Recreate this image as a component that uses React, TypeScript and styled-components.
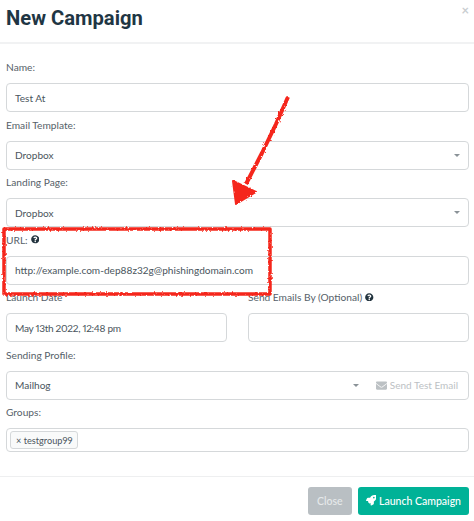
import React from "react";
import styled, { createGlobalStyle } from "styled-components";
import { FaEnvelope, FaQuestionCircle, FaRocket } from "react-icons/fa";

const GlobalStyle = createGlobalStyle`
  html, body {
    margin: 0;
    padding: 0;
    background: #fff;
  }
  body {
    font-family: Lato, "Liberation Sans", sans-serif;
    font-variant-numeric: proportional-nums;
    color: #4f5b63;
  }
`;

const Modal = styled.div`
  position: relative;
  width: 474px;
  height: 521px;
  overflow: hidden;
  background: #fff;
`;

const Header = styled.header`
  position: relative;
  height: 37px;
  padding: 5px 6px 0;
  border-bottom: 2px solid #f1f2f3;
`;

const Title = styled.h1`
  margin: 0;
  font-family: Roboto, "Liberation Sans", sans-serif;
  font-size: 20.2px;
  line-height: 26px;
  font-weight: 700;
  color: #1f3644;
`;

const CloseX = styled.span`
  position: absolute;
  top: 3px;
  right: 5px;
  font-size: 13px;
  line-height: 14px;
  font-weight: 700;
  color: #c9cdd0;
`;

const Body = styled.div`
  display: flex;
  flex-direction: column;
  padding: 15px 5px 0 6px;
`;

const Label = styled.label`
  display: flex;
  align-items: center;
  gap: 3px;
  height: 16px;
  margin-bottom: 8px;
  font-size: 10.2px;
  line-height: 16px;
  color: #566169;
  svg {
    color: #22333e;
    font-size: 8.5px;
  }
`;

const Field = styled.div<{ $h?: number }>`
  display: flex;
  align-items: center;
  height: ${(p) => p.$h ?? 29}px;
  box-sizing: border-box;
  margin-bottom: 4.5px;
  padding: 0 8px;
  border: 1px solid #d5d8da;
  border-radius: 4px;
  background: #fff;
  font-size: 10.1px;
  color: #4a555d;
`;

const Value = styled.span`
  flex: 1;
`;

const DateValue = styled.span`
  letter-spacing: -0.3px;
`;

const Caret = styled.span`
  width: 0;
  height: 0;
  border-left: 3px solid transparent;
  border-right: 3px solid transparent;
  border-top: 3px solid #8a9297;
`;

const Row = styled.div`
  display: grid;
  grid-template-columns: 221px 221px;
  justify-content: space-between;
`;

const TestEmail = styled.span`
  display: flex;
  align-items: center;
  gap: 3px;
  margin-left: 17px;
  margin-right: 2px;
  color: #bcc1c4;
  font-size: 10px;
  svg {
    font-size: 11px;
  }
`;

const Tag = styled.span`
  display: inline-flex;
  align-items: center;
  height: 16px;
  padding: 0 4px 0 5px;
  margin-left: -5px;
  border: 1px solid #d5d8da;
  border-radius: 3px;
  background: #f9fafa;
  font-size: 9.2px;
  color: #4a555d;
`;

const Footer = styled.footer`
  display: flex;
  justify-content: flex-end;
  gap: 6px;
  margin-top: 19px;
  padding: 10px 5px 0 0;
  border-top: 1px solid #eeeff0;
`;

const Button = styled.button<{ $primary?: boolean }>`
  display: flex;
  align-items: center;
  gap: 3px;
  height: 28px;
  padding: 0 ${(p) => (p.$primary ? 8 : 9)}px;
  border: 0;
  border-radius: 3px;
  background: ${(p) => (p.$primary ? "#00b297" : "#b9bfc3")};
  color: ${(p) => (p.$primary ? "#fff" : "#e6e9ea")};
  font-family: Lato, "Liberation Sans", sans-serif;
  font-size: 10.5px;
  font-weight: 500;
`;

const Markup = styled.svg`
  position: absolute;
  left: 0;
  top: 0;
  pointer-events: none;
`;

function Annotations() {
  return (
    <Markup width="474" height="521" viewBox="0 0 474 521">
      <defs>
        <filter id="rough" x="-5%" y="-5%" width="110%" height="110%">
          <feTurbulence type="fractalNoise" baseFrequency="0.5" numOctaves="2" seed="4" />
          <feDisplacementMap in="SourceGraphic" scale="3" />
        </filter>
      </defs>
      <g filter="url(#rough)" fill="none" stroke="#f5281e" strokeLinejoin="round">
        <rect x="4" y="229" width="266" height="65" strokeWidth="3.5" />
        <path d="M288 97 L276 124 L262 153 L246 184" strokeWidth="4" />
        <path d="M233 181 L256 192 L236 204 Z" fill="#f5281e" strokeWidth="2" />
      </g>
    </Markup>
  );
}

export default function App() {
  return (
    <Modal>
      <GlobalStyle />
      <Header>
        <Title>New Campaign</Title>
        <CloseX>×</CloseX>
      </Header>
      <Body>
        <Label>Name:</Label>
        <Field>Test At</Field>
        <Label>Email Template:</Label>
        <Field>
          <Value>Dropbox</Value>
          <Caret />
        </Field>
        <Label>Landing Page:</Label>
        <Field>
          <Value>Dropbox</Value>
          <Caret />
        </Field>
        <Label>
          URL: <FaQuestionCircle />
        </Label>
        <Field>http://example.com-dep88z32g@phishingdomain.com</Field>
        <Row>
          <div>
            <Label>Launch Date</Label>
            <Field>
              <DateValue>May 13th 2022, 12:48 pm</DateValue>
            </Field>
          </div>
          <div>
            <Label>
              Send Emails By (Optional) <FaQuestionCircle />
            </Label>
            <Field />
          </div>
        </Row>
        <Label>Sending Profile:</Label>
        <Field>
          <Value>Mailhog</Value>
          <Caret />
          <TestEmail>
            <FaEnvelope /> Send Test Email
          </TestEmail>
        </Field>
        <Label>Groups:</Label>
        <Field $h={24}>
          <Tag>× testgroup99</Tag>
        </Field>
      </Body>
      <Footer>
        <Button>Close</Button>
        <Button $primary>
          <FaRocket /> Launch Campaign
        </Button>
      </Footer>
      <Annotations />
    </Modal>
  );
}
